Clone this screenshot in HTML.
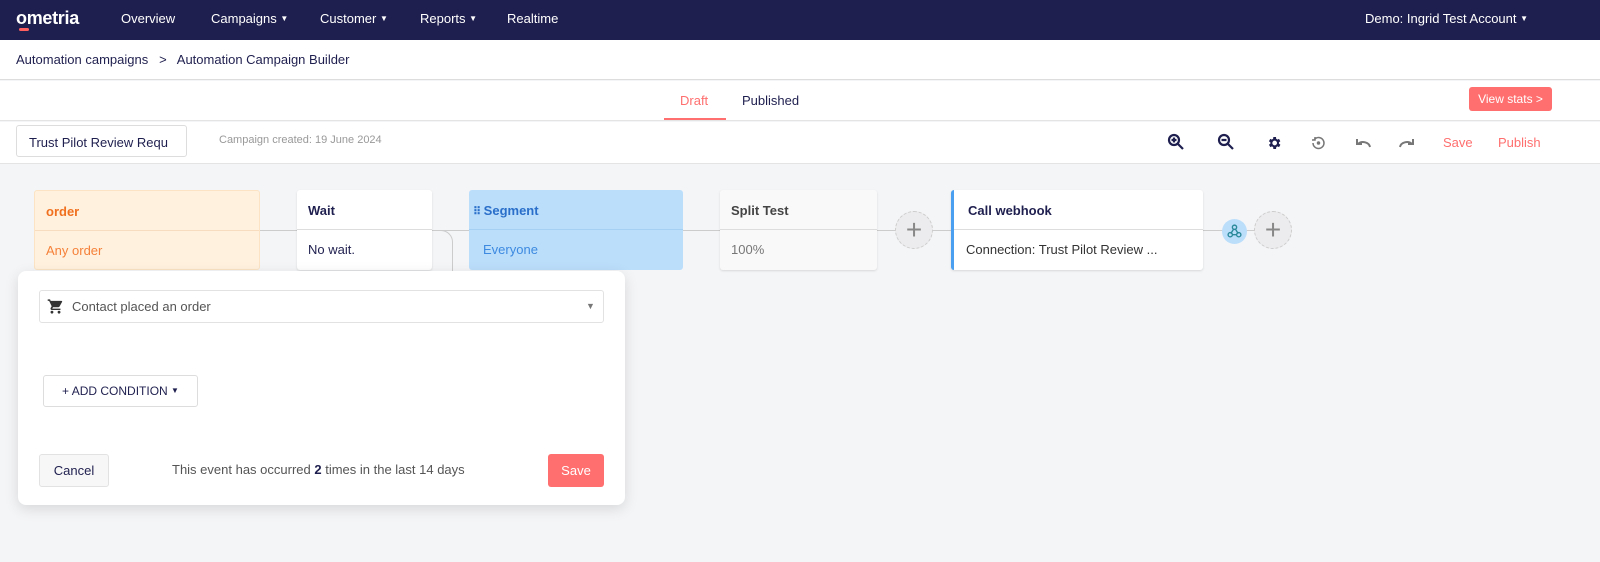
<!DOCTYPE html>
<html><head><meta charset="utf-8"><style>
*{box-sizing:border-box;margin:0;padding:0}
body{width:1600px;height:562px;overflow:hidden;font-family:"Liberation Sans",sans-serif;background:#f4f5f7;position:relative;color:#1f1f4f}
.a{position:absolute}
.nav{left:0;top:0;width:1600px;height:40px;background:#1f1f4f}
.nav span{position:absolute;top:11px;color:#fff;font-size:13px}
.car{font-size:8px;vertical-align:2px}
.card{position:absolute;top:190px;height:80px;background:#fff;border-radius:3px;box-shadow:0 1px 2px rgba(0,0,0,.12)}
.card .h{height:40px;border-bottom:1px solid #ddd;padding:13px 11px;font-size:13px;font-weight:bold}
.card .b{padding:12px 11px;font-size:13px}
.plus{position:absolute;width:38px;height:38px;border-radius:50%;border:1px dashed #ccc;background:#ececee;color:#888;font-size:28px;text-align:center;line-height:35px;font-weight:300}
</style></head><body>
<div class="a nav">
<span style="left:16px;top:8px;font-size:18px;font-weight:bold;letter-spacing:-0.3px">ometria</span>
<div class="a" style="left:19px;top:28px;width:10px;height:3px;background:#ff5f5f;border-radius:2px"></div>
<span style="left:121px">Overview</span>
<span style="left:211px">Campaigns <i class="car">▼</i></span>
<span style="left:320px">Customer <i class="car">▼</i></span>
<span style="left:420px">Reports <i class="car">▼</i></span>
<span style="left:507px">Realtime</span>
<span style="left:1365px">Demo: Ingrid Test Account <i class="car">▼</i></span>
</div>
<div class="a" style="left:0;top:40px;width:1600px;height:40px;background:#fff;border-bottom:1px solid #ddd"></div>
<div class="a" style="left:16px;top:52px;font-size:13px">Automation campaigns &nbsp;&nbsp;&gt;&nbsp;&nbsp; Automation Campaign Builder</div>
<div class="a" style="left:0;top:81px;width:1600px;height:40px;background:#fff;border-bottom:1px solid #e4e4e4"></div>
<div class="a" style="left:680px;top:93px;font-size:13px;color:#ff6f6f">Draft</div>
<div class="a" style="left:664px;top:118px;width:62px;height:2px;background:#ff6f6f"></div>
<div class="a" style="left:742px;top:93px;font-size:13px">Published</div>
<div class="a" style="left:1469px;top:87px;width:83px;height:24px;background:#ff6f6f;border-radius:3px;color:#fff;font-size:12px;text-align:center;line-height:24px">View stats &gt;</div>
<div class="a" style="left:0;top:122px;width:1600px;height:42px;background:#fff;border-bottom:1px solid #e4e4e4"></div>
<div class="a" style="left:16px;top:125px;width:171px;height:32px;border:1px solid #ddd;border-radius:3px;font-size:13px;padding:9px 12px;white-space:nowrap;overflow:hidden">Trust Pilot Review Requ</div>
<div class="a" style="left:219px;top:134px;font-size:11px;color:#999">Campaign created: 19 June 2024</div>
<svg class="a" style="left:1166px;top:132px" width="20" height="20" viewBox="0 0 20 20" fill="none" stroke="#1f1f4f" stroke-width="2.2"><circle cx="8" cy="8" r="5"/><path d="M12 12l5 5M5.5 8h5M8 5.5v5"/></svg>
<svg class="a" style="left:1216px;top:132px" width="20" height="20" viewBox="0 0 20 20" fill="none" stroke="#1f1f4f" stroke-width="2.2"><circle cx="8" cy="8" r="5"/><path d="M12 12l5 5M5.5 8h5"/></svg>
<svg class="a" style="left:1266px;top:135px" width="16" height="16" viewBox="0 0 24 24"><path fill="#1f1f4f" d="M19.4 13a7 7 0 000-2l2.1-1.6-2-3.5-2.5 1a7 7 0 00-1.7-1L15 3h-4l-.4 2.9a7 7 0 00-1.7 1l-2.5-1-2 3.5L6.6 11a7 7 0 000 2l-2.1 1.6 2 3.5 2.5-1a7 7 0 001.7 1L11 21h4l.4-2.9a7 7 0 001.7-1l2.5 1 2-3.5zM13 15.5a3.5 3.5 0 110-7 3.5 3.5 0 010 7z"/></svg>
<svg class="a" style="left:1310px;top:135px" width="16" height="16" viewBox="0 0 16 16" fill="none" stroke="#777" stroke-width="1.5"><path d="M3 8a5.5 5.5 0 105.5-5.5A5.5 5.5 0 004 5"/><path d="M2 5h3V2" /><circle cx="8.5" cy="8" r="1" fill="#777"/></svg>
<svg class="a" style="left:1354px;top:137px" width="18" height="12" viewBox="0 0 18 12" fill="none" stroke="#777" stroke-width="2"><path d="M16 10a7 6 0 00-12-3"/><path d="M3 2v5h5"/></svg>
<svg class="a" style="left:1398px;top:137px" width="18" height="12" viewBox="0 0 18 12" fill="none" stroke="#777" stroke-width="2"><path d="M2 10a7 6 0 0112-3"/><path d="M15 2v5h-5"/></svg>
<div class="a" style="left:1443px;top:135px;font-size:13px;color:#ff6f6f">Save</div>
<div class="a" style="left:1498px;top:135px;font-size:13px;color:#ff6f6f">Publish</div>

<div class="a" style="left:260px;top:230px;width:1000px;height:1px;background:#ccc"></div>
<div class="a" style="left:432px;top:230px;width:21px;height:60px;border:1px solid #ccc;border-left:none;border-bottom:none;border-radius:0 12px 0 0"></div>
<div class="card" style="left:34px;width:226px;background:#fff1dd;box-shadow:none;border:1px solid #fbe3c4"><div class="h" style="color:#f07020;border-color:#f8dcc0">order</div><div class="b" style="color:#f5813a">Any order</div></div>
<div class="card" style="left:297px;width:135px"><div class="h">Wait</div><div class="b">No wait.</div></div>
<div class="card" style="left:469px;width:214px;background:#bbdefb;box-shadow:none"><div class="h" style="color:#2a6fc9;border-color:#a5cff3;padding-left:4px"><span style="font-size:11px;letter-spacing:-1px">⠿</span> Segment</div><div class="b" style="color:#3d8ae0;padding-left:14px">Everyone</div></div>
<div class="card" style="left:720px;width:157px;background:#f9f9f9"><div class="h" style="color:#444">Split Test</div><div class="b" style="color:#777">100%</div></div>
<div class="plus" style="left:895px;top:211px">+</div>
<div class="card" style="left:951px;width:252px;border-left:3px solid #4a9ff0"><div class="h" style="padding-left:14px">Call webhook</div><div class="b" style="padding-left:12px;color:#333">Connection: Trust Pilot Review ...</div></div>
<div class="a" style="left:1222px;top:219px;width:25px;height:25px;border-radius:50%;background:#bbdefb"></div>
<svg class="a" style="left:1226px;top:223px" width="17" height="17" viewBox="0 0 16 16" fill="none" stroke="#2a8a9a" stroke-width="1.3"><circle cx="8" cy="4" r="2"/><circle cx="4" cy="11" r="2"/><circle cx="12" cy="11" r="2"/><path d="M7 6l-2.5 4M6 11h4M9 6l2.5 4"/></svg>
<div class="plus" style="left:1254px;top:211px">+</div>

<div class="a" style="left:18px;top:271px;width:607px;height:234px;background:#fff;border-radius:8px;box-shadow:0 4px 14px rgba(0,0,0,.12)"></div>
<div class="a" style="left:39px;top:290px;width:565px;height:33px;border:1px solid #e2e2e2;border-radius:3px"></div>
<svg class="a" style="left:47px;top:298px" width="17" height="17" viewBox="0 0 24 24"><path fill="#333" d="M7 18a2 2 0 100 4 2 2 0 000-4zM1 2v2h2l3.6 7.6-1.4 2.4A2 2 0 007 17h12v-2H7.4l1.1-2h7.5a2 2 0 001.7-1l3.6-6.5A1 1 0 0020.4 4H5.2l-.9-2zm16 16a2 2 0 100 4 2 2 0 000-4z"/></svg>
<div class="a" style="left:72px;top:299px;font-size:13px;color:#555">Contact placed an order</div>
<div class="a" style="left:586px;top:301px;font-size:9px;color:#777">▼</div>
<div class="a" style="left:43px;top:375px;width:155px;height:32px;border:1px solid #ddd;border-radius:3px;font-size:12px;text-align:center;line-height:30px">+ ADD CONDITION <i class="car">▼</i></div>
<div class="a" style="left:39px;top:454px;width:70px;height:33px;border:1px solid #e2e2e2;background:#f7f7f7;border-radius:3px;font-size:13px;text-align:center;line-height:31px">Cancel</div>
<div class="a" style="left:172px;top:462px;font-size:13px;color:#555">This event has occurred <b style="color:#1f1f4f">2</b> times in the last 14 days</div>
<div class="a" style="left:548px;top:454px;width:56px;height:33px;background:#ff6f6f;border-radius:3px;color:#fff;font-size:13px;text-align:center;line-height:33px">Save</div>
</body></html>
